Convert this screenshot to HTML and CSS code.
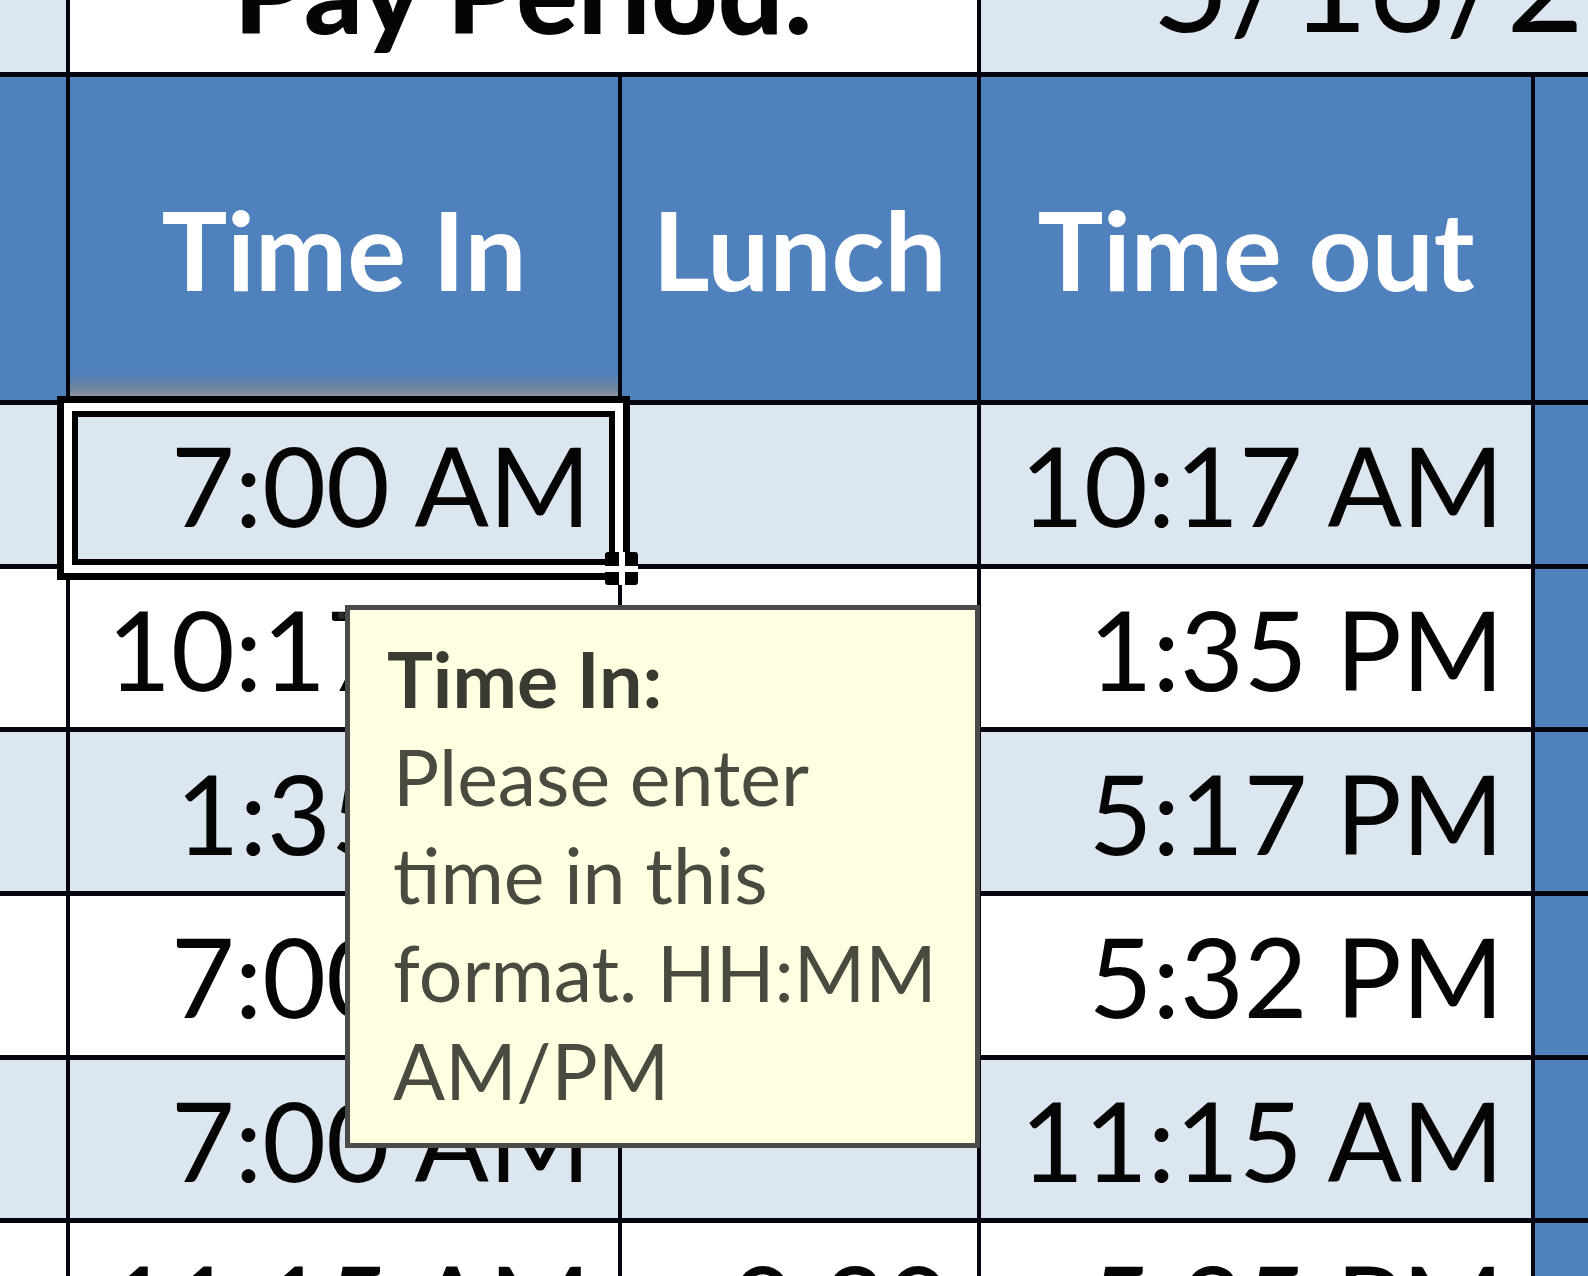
FILE: index.html
```html
<!DOCTYPE html>
<html lang="en">
<head>
<meta charset="utf-8">
<title>Timesheet</title>
<link rel="stylesheet" href="styles.css">
</head>
<body>
<div class="sheet">
  <div class="grid">
    <div class="c band"></div>
    <div class="c top-label"><span>Pay Period:</span></div>
    <div class="c band top-date"><span>5/16/2011</span></div>

    <div class="c hdr"></div>
    <div class="c hdr hdr-active">Time In</div>
    <div class="c hdr">Lunch</div>
    <div class="c hdr">Time out</div>
    <div class="c hdr"></div>

    <div class="c band"></div>
    <div class="c band">7:00 AM</div>
    <div class="c band"></div>
    <div class="c band">10:17 AM</div>
    <div class="c edge"></div>

    <div class="c"></div>
    <div class="c">10:17 AM</div>
    <div class="c"></div>
    <div class="c">1:35 PM</div>
    <div class="c edge"></div>

    <div class="c band"></div>
    <div class="c band">1:35 PM</div>
    <div class="c band"></div>
    <div class="c band">5:17 PM</div>
    <div class="c edge"></div>

    <div class="c"></div>
    <div class="c">7:00 AM</div>
    <div class="c"></div>
    <div class="c">5:32 PM</div>
    <div class="c edge"></div>

    <div class="c band"></div>
    <div class="c band">7:00 AM</div>
    <div class="c band"></div>
    <div class="c band">11:15 AM</div>
    <div class="c edge"></div>

    <div class="c"></div>
    <div class="c">11:15 AM</div>
    <div class="c">0:30</div>
    <div class="c">5:35 PM</div>
    <div class="c edge"></div>
  </div>

  <div class="selection"></div>
  <div class="fill-handle"></div>

  <div class="tip">
    <div class="tip-title">Time In:</div>
    <div class="tip-body">Please enter<br>time in this<br>format. HH:MM<br>AM/PM</div>
  </div>
</div>
</body>
</html>
```

FILE: styles.css
```css
* { box-sizing: border-box; }

html, body {
  margin: 0;
  padding: 0;
}

body {
  width: 1588px;
  height: 1276px;
  overflow: hidden;
  background: #ffffff;
  font-family: "Lato", "Liberation Sans", sans-serif;
}

.sheet {
  position: relative;
  width: 1588px;
  height: 1276px;
  overflow: hidden;
}

.grid {
  display: grid;
  width: 1588px;
  grid-template-columns: 66px 548px 355px 550px 1fr;
  grid-template-rows: 72px 323px repeat(6, 158.7px);
  column-gap: 4px;
  row-gap: 5px;
  background: #05050f;
}

.c {
  display: flex;
  align-items: center;
  justify-content: flex-end;
  padding-right: 27px;
  background: #ffffff;
  color: #050505;
  font-size: 110px;
  line-height: 1.2;
  white-space: nowrap;
  overflow: hidden;
}

.band { background: #dce6f1; }

.edge { background: #4f81bd; }

.hdr {
  background: #4f81bd;
  color: #ffffff;
  font-weight: 700;
  justify-content: center;
  padding: 18px 0 0 0;
}

.hdr-active {
  background: linear-gradient(to bottom, #4f81bd 0, #4f81bd calc(100% - 26px), #6f849f calc(100% - 12px), #9a9ca0 100%);
}

.top-label {
  grid-column: span 2;
  justify-content: center;
  align-items: flex-start;
  padding: 0;
  font-weight: 900;
  font-size: 115px;
}

.top-label span { margin-top: -80px; }

.top-date {
  grid-column: span 2;
  justify-content: flex-start;
  align-items: flex-start;
  padding: 0 0 0 171px;
  font-size: 134px;
}

.top-date span { margin-top: -99px; }

.selection {
  position: absolute;
  left: 72px;
  top: 411px;
  width: 543px;
  height: 154px;
  border: 6px solid #000000;
  box-shadow: 0 0 0 8px #ffffff, 0 0 0 15px #000000;
}

.fill-handle {
  position: absolute;
  left: 605px;
  top: 552px;
  width: 33px;
  height: 33px;
  background:
    linear-gradient(#ffffff, #ffffff) center / 100% 6px no-repeat,
    linear-gradient(#ffffff, #ffffff) center / 6px 100% no-repeat,
    #000000;
  border-radius: 3px;
}

.tip {
  position: absolute;
  left: 345px;
  top: 605px;
  width: 635px;
  height: 543px;
  background: #ffffe1;
  border: 5px solid #4a4a48;
  padding: 19px 0 0 37px;
  font-size: 77px;
  line-height: 98px;
  color: #4a4a40;
  white-space: nowrap;
}

.tip::before {
  content: "";
  position: absolute;
  left: -12px;
  top: 2px;
  width: 7px;
  height: 7px;
  border-radius: 50%;
  background: #2a2a2a;
}

.tip-title {
  font-weight: 700;
  color: #3a3a32;
}

.tip-body { padding-left: 6px; }
```
